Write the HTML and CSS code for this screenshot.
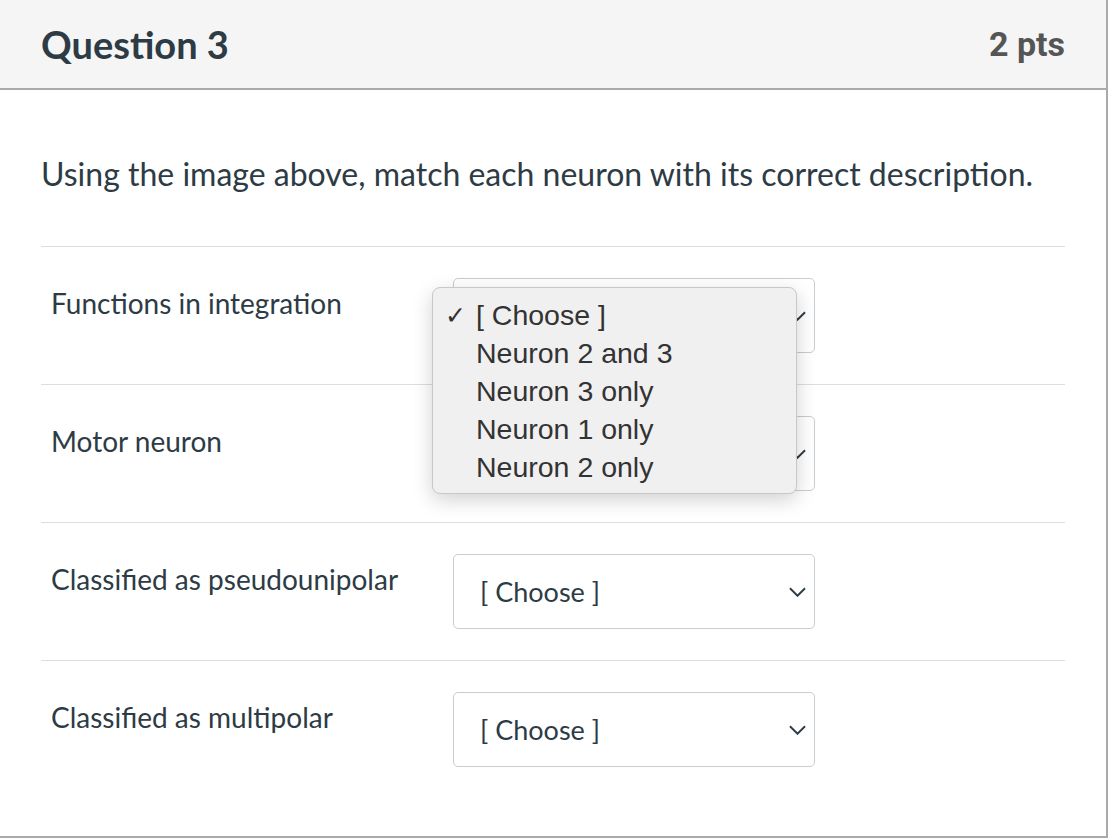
FILE: index.html
```html
<!DOCTYPE html>
<html>
<head>
    <title>Question 3</title>
    <link rel="stylesheet" href="styles.css">
</head>
<body>
    <div class="quiz-card">
        <div class="quiz-header">
            <h2 class="quiz-title">Question 3</h2>
            <span class="quiz-points">2 pts</span>
        </div>
        <div class="quiz-body">
            <p class="quiz-text">Using the image above, match each neuron with its correct description.</p>

            <div class="match-row">
                <div class="match-label">Functions in integration</div>
                <div class="match-select">
                    <span class="select-value">[ Choose ]</span>
                    <svg class="chevron" viewBox="0 0 18 10"><path d="M1 1l8 8 8-8"/></svg>
                </div>
                <ul class="select-menu">
                    <li class="selected">[ Choose ]</li>
                    <li>Neuron 2 and 3</li>
                    <li>Neuron 3 only</li>
                    <li>Neuron 1 only</li>
                    <li>Neuron 2 only</li>
                </ul>
            </div>
            <div class="match-row">
                <div class="match-label">Motor neuron</div>
                <div class="match-select">
                    <span class="select-value">[ Choose ]</span>
                    <svg class="chevron" viewBox="0 0 18 10"><path d="M1 1l8 8 8-8"/></svg>
                </div>
            </div>
            <div class="match-row">
                <div class="match-label">Classified as pseudounipolar</div>
                <div class="match-select">
                    <span class="select-value">[ Choose ]</span>
                    <svg class="chevron" viewBox="0 0 18 10"><path d="M1 1l8 8 8-8"/></svg>
                </div>
            </div>
            <div class="match-row">
                <div class="match-label">Classified as multipolar</div>
                <div class="match-select">
                    <span class="select-value">[ Choose ]</span>
                    <svg class="chevron" viewBox="0 0 18 10"><path d="M1 1l8 8 8-8"/></svg>
                </div>
            </div>
        </div>
    </div>
</body>
</html>
```

FILE: styles.css
```css
body {
    margin: 0;
    font-family: Lato, 'Noto Sans', sans-serif;
    color: #2d3b45;
    background: #ffffff;
}

.quiz-card {
    width: 1106px;
    height: 836px;
    border-right: 2px solid #aaaaaa;
    border-bottom: 2px solid #aaaaaa;
}

.quiz-header {
    height: 88px;
    background: #f5f5f5;
    border-bottom: 2px solid #aaaaaa;
    display: flex;
    align-items: center;
    justify-content: space-between;
    padding: 0 41px;
}

.quiz-title {
    margin: 0;
    font-size: 38px;
    font-weight: 700;
}

.quiz-points {
    font-family: Roboto, 'Liberation Sans', sans-serif;
    font-size: 34px;
    font-weight: 700;
    color: #555555;
}

.quiz-body {  padding: 0 41px;  }

.quiz-text {
    margin: 0;
    padding: 64px 0 52px;
    font-size: 32px;
    line-height: 40px;
}

.match-row {
    position: relative;
    height: 137px;
    border-top: 1px solid #dddddd;
    display: flex;
    align-items: flex-start;
}

.match-label {
    width: 402px;
    padding: 38px 0 0 10px;
    font-size: 28px;
    line-height: 36px;
}

.match-select {
    margin-top: 31px;
    width: 362px;
    height: 75px;
    box-sizing: border-box;
    border: 1px solid #c7cdd1;
    border-radius: 5px;
    display: flex;
    align-items: center;
    justify-content: space-between;
    padding: 0 8px 0 26px;
}

.select-value {  font-size: 27px;  }

.chevron {
    width: 17px;
    height: 10px;
    fill: none;
    stroke: #2d3b45;
    stroke-width: 2;
}

/* native popup of the first select, left open */
.select-menu {
    position: absolute;
    z-index: 2;
    left: 391px;
    top: 40px;
    width: 365px;
    margin: 0;
    padding: 8px 0 7px;
    list-style: none;
    box-sizing: border-box;
    background: #f0f0f0;
    border: 1px solid #c8c8c8;
    border-radius: 8px;
    box-shadow: 0 6px 20px rgba(0, 0, 0, 0.18);
    font-family: 'Liberation Sans', Arial, sans-serif;
    font-size: 28.5px;
    color: #333333;
}

.select-menu li {
    height: 38px;
    line-height: 38px;
    padding-left: 43px;
}

.select-menu li.selected::before {
    content: "\2713";
    display: inline-block;
    width: 31px;
    margin-left: -31px;
    font-size: 25px;
    vertical-align: top;
}
```
